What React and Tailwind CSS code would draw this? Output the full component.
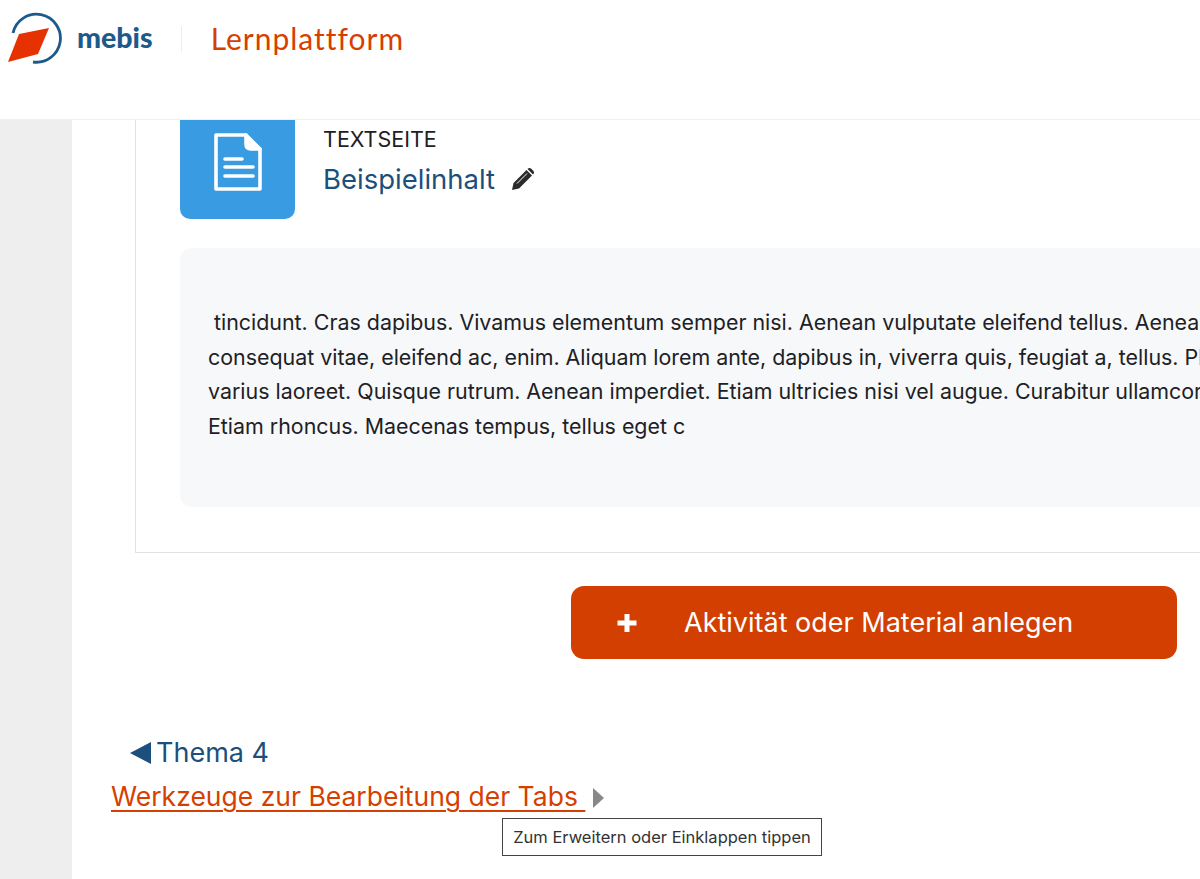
const lines = [
  "\u00a0tincidunt. Cras dapibus. Vivamus elementum semper nisi. Aenean vulputate eleifend tellus. Aenean leo ligula, porttitor eu,",
  "consequat vitae, eleifend ac, enim. Aliquam lorem ante, dapibus in, viverra quis, feugiat a, tellus. Phasellus viverra nulla ut metus",
  "varius laoreet. Quisque rutrum. Aenean imperdiet. Etiam ultricies nisi vel augue. Curabitur ullamcorper ultricies nisi. Nam eget dui.",
  "Etiam rhoncus. Maecenas tempus, tellus eget c",
];

function Logo() {
  return (
    <svg width="56" height="56" viewBox="7 11 56 56" className="shrink-0">
      <path d="M13 33 A 24 24 0 1 1 33 62" fill="none" stroke="#1d5a8c" strokeWidth="2.8" />
      <path d="M19 34 L49 28 L38 54 L8 62 Z" fill="#e63200" />
    </svg>
  );
}

function PageIcon() {
  return (
    <svg width="48" height="58" viewBox="0 0 48 58" fill="none" stroke="#fff" strokeWidth="3.6" strokeLinejoin="round" strokeLinecap="round">
      <path d="M4 2 H32 L46 16 V56 H2 V2 Z" />
      <path d="M32 2 V11 Q32 16 37 16 H46" fill="#fff" />
      <path d="M11 26 H28 M11 34 H39 M11 43 H39" />
    </svg>
  );
}

function Pencil() {
  return (
    <svg width="24" height="24" viewBox="0 0 24 24" fill="#2b2b2b">
      <path d="M1 23 L2.5 16 L15.5 3 L21 8.5 L8 21.5 Z M17 1.5 Q18.5 .3 20 1.5 L22.5 4 Q23.7 5.5 22.5 7 L22 7.5 L16.5 2 Z" />
      <path d="M6 16.5 L16 6.5" stroke="#fff" strokeWidth="1" />
    </svg>
  );
}

export default function App() {
  return (
    <div className="h-[879px] w-[1200px] overflow-hidden bg-white font-['Inter',sans-serif] text-[#1d2125] flex flex-col relative">
      <header className="h-[120px] shrink-0 border-b border-[#f0f0f0] flex items-start pt-[11px] pl-[7px]">
        <Logo />
        <span className="ml-[14px] mt-[10px] text-[28.5px] leading-[32px] font-black text-[#1d5a8c] font-['Lato',sans-serif]">mebis</span>
        <div className="ml-[28px] mt-[15px] h-[26px] border-l border-[#eeeeee]" />
        <span className="ml-[29px] mt-[7px] text-[30px] leading-[40px] text-[#d63f00] font-['Lato',sans-serif] tracking-[1px]">Lernplattform</span>
      </header>

      <div className="flex-1 flex min-h-0">
        <div className="w-[72px] shrink-0 bg-[#eeeeee]" />
        <main className="flex-1 min-w-0">
          <section className="ml-[63px] h-[433px] border-l border-b border-[#dee2e6] pl-[44px]">
            <div className="flex items-start">
              <div className="w-[115px] h-[99px] shrink-0 bg-[#399be2] rounded-b-[10px] flex items-center justify-center pb-[16px]">
                <PageIcon />
              </div>
              <div className="ml-[28px] pt-[7px]">
                <div className="text-[21.5px] leading-[24px]">TEXTSEITE</div>
                <div className="mt-[12px] flex items-center">
                  <span className="text-[27.5px] leading-[32px] text-[#1d4f7c]">Beispielinhalt</span>
                  <span className="ml-[16px] flex"><Pencil /></span>
                </div>
              </div>
            </div>
            <div className="mt-[29px] h-[259px] bg-[#f7f8fa] rounded-l-[12px] pl-[28px] pt-[57px] text-[21.4px] leading-[34.7px] whitespace-nowrap overflow-hidden">
              {lines.map((l) => (
                <div key={l}>{l}</div>
              ))}
            </div>
          </section>

          <div className="pl-[499px] pt-[33px]">
            <button className="w-[606px] h-[73px] bg-[#d23f00] rounded-[13px] text-white flex items-center pl-[46px]">
              <svg width="20" height="20" viewBox="0 0 20 20" fill="#fff" className="shrink-0">
                <path d="M7.5 1 H12.5 V7.5 H19.5 V12.5 H12.5 V19 H7.5 V12.5 H.5 V7.5 H7.5 Z" />
              </svg>
              <span className="ml-[47px] text-[27px] leading-[32px]">Aktivität oder Material anlegen</span>
            </button>
          </div>

          <a className="ml-[58px] mt-[78px] flex items-center text-[27px] leading-[32px] text-[#1d4f7c]">
            <span className="w-0 h-0 border-y-[11px] border-y-transparent border-r-[21px] border-r-[#1d4f7c] mr-[5px]" />
            Thema 4
          </a>
          <div className="ml-[39px] mt-[11px] flex items-center text-[26.5px] leading-[32px]">
            <span className="text-[#d63f00] underline whitespace-pre underline-offset-[4px] decoration-[2px]">Werkzeuge zur Bearbeitung der Tabs </span>
            <span className="ml-[8px] mt-[3px] w-0 h-0 border-y-[10px] border-y-transparent border-l-[11px] border-l-[#888888]" />
          </div>
        </main>
      </div>

      <div className="absolute left-[502px] top-[818px] w-[320px] h-[38px] bg-white border border-[#444444] flex items-center justify-center text-[16.5px] text-[#333333]">
        Zum Erweitern oder Einklappen tippen
      </div>
    </div>
  );
}
